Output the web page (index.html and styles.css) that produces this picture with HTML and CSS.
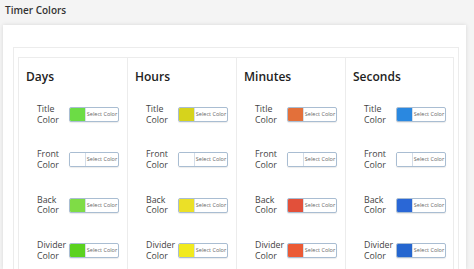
FILE: index.html
```html
<!DOCTYPE html>
<html lang="en">
<head>
    <meta charset="UTF-8">
    <title>Timer Colors</title>
    <link rel="stylesheet" href="styles.css">
</head>
<body>
<div class="page-head">Timer Colors</div>
<div class="panel">
    <div class="timer-box">
        <div class="unit">
            <h2>Days</h2>
            <div class="row"><div class="label">Title<br>Color</div><div class="picker"><span class="swatch" style="background:#6cdc45"></span><span class="pick-text">Select Color</span></div></div>
            <div class="row"><div class="label">Front<br>Color</div><div class="picker"><span class="swatch" style="background:#ffffff"></span><span class="pick-text">Select Color</span></div></div>
            <div class="row"><div class="label">Back<br>Color</div><div class="picker"><span class="swatch" style="background:#7fdc46"></span><span class="pick-text">Select Color</span></div></div>
            <div class="row"><div class="label">Divider<br>Color</div><div class="picker"><span class="swatch" style="background:#5bd21f"></span><span class="pick-text">Select Color</span></div></div>
        </div>
        <div class="unit">
            <h2>Hours</h2>
            <div class="row"><div class="label">Title<br>Color</div><div class="picker"><span class="swatch" style="background:#d6d31c"></span><span class="pick-text">Select Color</span></div></div>
            <div class="row"><div class="label">Front<br>Color</div><div class="picker"><span class="swatch" style="background:#ffffff"></span><span class="pick-text">Select Color</span></div></div>
            <div class="row"><div class="label">Back<br>Color</div><div class="picker"><span class="swatch" style="background:#ebe027"></span><span class="pick-text">Select Color</span></div></div>
            <div class="row"><div class="label">Divider<br>Color</div><div class="picker"><span class="swatch" style="background:#f1ea1f"></span><span class="pick-text">Select Color</span></div></div>
        </div>
        <div class="unit">
            <h2>Minutes</h2>
            <div class="row"><div class="label">Title<br>Color</div><div class="picker"><span class="swatch" style="background:#e3703a"></span><span class="pick-text">Select Color</span></div></div>
            <div class="row"><div class="label">Front<br>Color</div><div class="picker"><span class="swatch" style="background:#ffffff"></span><span class="pick-text">Select Color</span></div></div>
            <div class="row"><div class="label">Back<br>Color</div><div class="picker"><span class="swatch" style="background:#e2503a"></span><span class="pick-text">Select Color</span></div></div>
            <div class="row"><div class="label">Divider<br>Color</div><div class="picker"><span class="swatch" style="background:#eb5a35"></span><span class="pick-text">Select Color</span></div></div>
        </div>
        <div class="unit">
            <h2>Seconds</h2>
            <div class="row"><div class="label">Title<br>Color</div><div class="picker"><span class="swatch" style="background:#2a88e0"></span><span class="pick-text">Select Color</span></div></div>
            <div class="row"><div class="label">Front<br>Color</div><div class="picker"><span class="swatch" style="background:#ffffff"></span><span class="pick-text">Select Color</span></div></div>
            <div class="row"><div class="label">Back<br>Color</div><div class="picker"><span class="swatch" style="background:#2a67d6"></span><span class="pick-text">Select Color</span></div></div>
            <div class="row"><div class="label">Divider<br>Color</div><div class="picker"><span class="swatch" style="background:#2566cf"></span><span class="pick-text">Select Color</span></div></div>
        </div>
    </div>
</div>
</body>
</html>
```

FILE: styles.css
```css
html, body {
    overflow: hidden;
}

body {
    margin: 0;
    padding: 0;
    height: 269px;
    background-color: #f4f4f4;
    font-family: "Open Sans", "Noto Sans", sans-serif;
    color: #333;
}

.page-head {
    height: 25px;
    padding-left: 5px;
    font-size: 10px;
    font-weight: 600;
    line-height: 20px;
    color: #333;
}

.panel {
    margin: 0 8px 0 3px;
    padding: 22px 7px 0 10px;
    background-color: #fff;
    box-shadow: 0 0 4px rgba(0, 0, 0, 0.12);
    height: 222px;
}

.timer-box {
    display: flex;
    border: 1px solid #ececec;
    border-bottom: none;
    padding: 9px 4px 0 4px;
    height: 212px;
}

.unit {
    width: 109px;
    flex-shrink: 0;
    border: 1px solid #ececec;
    border-right: none;
    border-bottom: none;
    padding: 0 7px;
    box-sizing: border-box;
}

.unit:last-child {
    border-right: 1px solid #ececec;
}

h2 {
    margin: 10px 0 6px 0;
    font-size: 12px;
    font-weight: 600;
    color: #222;
    line-height: 18px;
}

.row {
    display: flex;
    align-items: center;
    height: 45.3px;
    padding-left: 11px;
}

.label {
    width: 32px;
    font-size: 8.8px;
    line-height: 10.5px;
    color: #444;
}

.picker {
    display: flex;
    width: 50px;
    height: 15px;
    border: 1px solid #a9bdd2;
    border-radius: 2px;
    box-sizing: border-box;
    background-color: #fff;
    box-shadow: 0 1px 1px rgba(0, 0, 0, 0.08);
}

.swatch {
    width: 15px;
    height: 100%;
    border-right: 1px solid #d4dde8;
    border-radius: 1px 0 0 1px;
}

.pick-text {
    flex: 1;
    font-size: 5.5px;
    line-height: 13px;
    text-align: center;
    color: #666;
}
```
